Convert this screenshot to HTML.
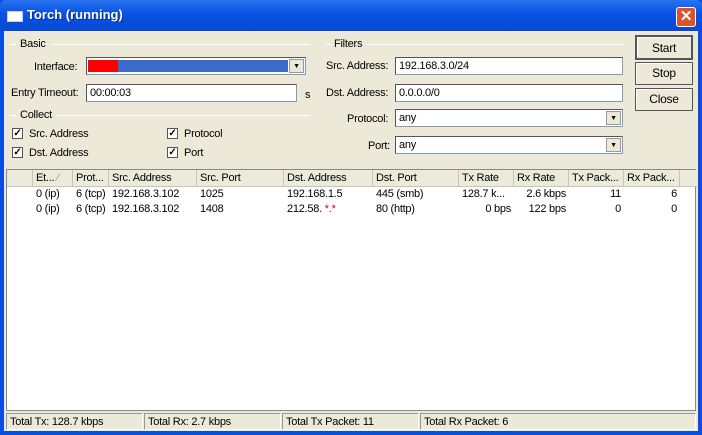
<!DOCTYPE html><html><head><style>
*{box-sizing:border-box}body{margin:0;width:702px;height:435px;overflow:hidden;font-family:"Liberation Sans",sans-serif;font-size:11px;color:#000;letter-spacing:-0.25px}
.win{position:absolute;left:0;top:0;width:702px;height:435px;background:#0a4ee0;}
.title{position:absolute;left:0;top:0;width:702px;height:31px;background:linear-gradient(#2a74f0,#0a55e4 40%,#0648d4);border-radius:6px 6px 0 0}
.title span{position:absolute;left:27px;top:7px;color:#fff;font-weight:bold;font-size:13px;text-shadow:1px 1px #0a2a8a;letter-spacing:0}
.ic{position:absolute;left:7px;top:11px;width:16px;height:11px;background:#fff;border:1px solid #cce}
.x{position:absolute;left:676px;top:7px;width:20px;height:20px;background:#d9532f;border:1px solid #fff;border-radius:3px;color:#fff;font-size:15px;font-weight:bold;text-align:center;line-height:18px}
.body{position:absolute;left:4px;top:31px;width:694px;height:400px;background:#ece9d8}
.lbl{position:absolute;white-space:nowrap}
.grp{position:absolute;height:1px;background:#c8c5b5;border-bottom:1px solid #fff}
.fld{position:absolute;background:#fff;border:1px solid #7f9db9;border-top-color:#555;border-left-color:#555;padding:2px 0 0 3px;height:18px}
.dd{position:absolute;right:1px;top:1px;width:15px;height:14px;background:#ece9d8;border:1px solid #999;font-size:7px;text-align:center;line-height:13px}
.btn{position:absolute;width:58px;background:#ece9d8;border:1px solid #555;box-shadow:inset 1px 1px #fff;text-align:center;font-size:12px}
.cb{position:absolute;width:11px;height:11px;background:#fff;border:1px solid #555;font-size:10px;line-height:9px;text-align:center;font-weight:bold}
.list{position:absolute;left:6px;top:169px;width:690px;height:242px;background:#fff;border:1px solid #888}
.hd{position:absolute;top:0;height:17px;border-right:1px solid #c8c5b5;border-bottom:1px solid #c8c5b5;background:#ebeadb;padding:2px 3px;white-space:nowrap;overflow:hidden}
.c{position:absolute;white-space:nowrap;padding:0 3px}
.r{text-align:right}
.st{position:absolute;top:413px;height:17px;border:1px solid #999;border-right-color:#fff;border-bottom-color:#fff;padding:2px 3px;white-space:nowrap}
</style></head><body><div class="win">
<div class="title"><div class="ic"></div><span>Torch (running)</span><div class="x">✕</div></div>
<div class="body"></div>
<div class="lbl" style="left:20px;top:38px">Basic</div><div class="grp" style="left:52px;top:44px;width:258px"></div><div class="grp" style="left:10px;top:44px;width:6px"></div>
<div class="lbl" style="left:334px;top:38px">Filters</div><div class="grp" style="left:366px;top:44px;width:258px"></div><div class="grp" style="left:326px;top:44px;width:6px"></div>
<div class="lbl" style="left:34px;top:61px">Interface:</div>
<div class="fld" style="left:86px;top:57px;width:220px;padding:0"><div style="position:absolute;left:1px;top:2px;width:30px;height:12px;background:#f00"></div><div style="position:absolute;left:31px;top:2px;width:170px;height:12px;background:#3a6bc8"></div><div class="dd">▼</div></div>
<div class="lbl" style="left:11px;top:87px">Entry Timeout:</div>
<div class="fld" style="left:86px;top:84px;width:211px">00:00:03</div>
<div class="lbl" style="left:305px;top:89px">s</div>
<div class="lbl" style="left:20px;top:109px">Collect</div><div class="grp" style="left:56px;top:115px;width:254px"></div><div class="grp" style="left:10px;top:115px;width:6px"></div>
<div class="cb" style="left:12px;top:128px">✓</div><div class="lbl" style="left:29px;top:128px">Src. Address</div>
<div class="cb" style="left:12px;top:147px">✓</div><div class="lbl" style="left:29px;top:147px">Dst. Address</div>
<div class="cb" style="left:167px;top:128px">✓</div><div class="lbl" style="left:184px;top:128px">Protocol</div>
<div class="cb" style="left:167px;top:147px">✓</div><div class="lbl" style="left:184px;top:147px">Port</div>
<div class="lbl" style="left:326px;top:60px">Src. Address:</div><div class="fld" style="left:395px;top:57px;width:228px">192.168.3.0/24</div>
<div class="lbl" style="left:326px;top:87px">Dst. Address:</div><div class="fld" style="left:395px;top:84px;width:228px">0.0.0.0/0</div>
<div class="lbl" style="left:347px;top:113px">Protocol:</div><div class="fld" style="left:395px;top:109px;width:228px">any<div class="dd">▼</div></div>
<div class="lbl" style="left:368px;top:140px">Port:</div><div class="fld" style="left:395px;top:136px;width:228px">any<div class="dd">▼</div></div>
<div class="btn" style="left:635px;top:35px;height:25px;line-height:23px;border-width:2px">Start</div>
<div class="btn" style="left:635px;top:62px;height:23px;line-height:21px">Stop</div>
<div class="btn" style="left:635px;top:88px;height:23px;line-height:21px">Close</div>
<div class="list">
<div class="hd" style="left:0;width:26px"></div>
<div class="hd" style="left:26px;width:40px">Et... <span style="color:#999">⁄</span></div>
<div class="hd" style="left:66px;width:36px">Prot...</div>
<div class="hd" style="left:102px;width:88px">Src. Address</div>
<div class="hd" style="left:190px;width:87px">Src. Port</div>
<div class="hd" style="left:277px;width:89px">Dst. Address</div>
<div class="hd" style="left:366px;width:86px">Dst. Port</div>
<div class="hd" style="left:452px;width:55px">Tx Rate</div>
<div class="hd" style="left:507px;width:55px">Rx Rate</div>
<div class="hd" style="left:562px;width:55px">Tx Pack...</div>
<div class="hd" style="left:617px;width:56px">Rx Pack...</div>
<div class="hd" style="left:673px;width:17px;border-right:0"></div>
<div class="c" style="left:26px;top:18px">0 (ip)</div><div class="c" style="left:66px;top:18px">6 (tcp)</div><div class="c" style="left:102px;top:18px">192.168.3.102</div><div class="c" style="left:190px;top:18px">1025</div><div class="c" style="left:277px;top:18px">192.168.1.5</div><div class="c" style="left:366px;top:18px">445 (smb)</div><div class="c" style="left:452px;top:18px">128.7 k...</div><div class="c r" style="left:507px;top:18px;width:55px">2.6 kbps</div><div class="c r" style="left:562px;top:18px;width:55px">11</div><div class="c r" style="left:617px;top:18px;width:56px">6</div>
<div class="c" style="left:26px;top:33px">0 (ip)</div><div class="c" style="left:66px;top:33px">6 (tcp)</div><div class="c" style="left:102px;top:33px">192.168.3.102</div><div class="c" style="left:190px;top:33px">1408</div><div class="c" style="left:277px;top:33px">212.58. <span style="color:#c00">*.*</span></div><div class="c" style="left:366px;top:33px">80 (http)</div><div class="c r" style="left:452px;top:33px;width:55px">0 bps</div><div class="c r" style="left:507px;top:33px;width:55px">122 bps</div><div class="c r" style="left:562px;top:33px;width:55px">0</div><div class="c r" style="left:617px;top:33px;width:56px">0</div>
</div>
<div class="st" style="left:6px;width:137px">Total Tx: 128.7 kbps</div>
<div class="st" style="left:144px;width:137px">Total Rx: 2.7 kbps</div>
<div class="st" style="left:282px;width:137px">Total Tx Packet: 11</div>
<div class="st" style="left:420px;width:276px">Total Rx Packet: 6</div>
</div></body></html>
